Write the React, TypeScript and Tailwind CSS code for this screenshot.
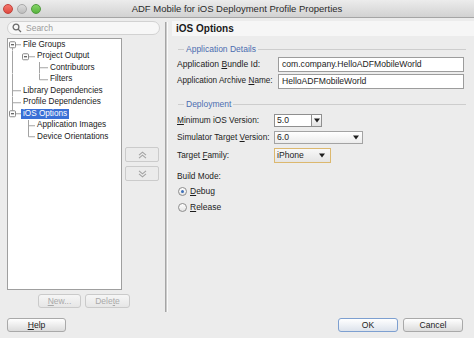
import type { ReactNode } from 'react';

function Expander({ cx }: { cx: number }) {
  return (
    <>
      <rect x={cx - 3} y={2.75} width={6} height={6} rx={1} fill="#fdfdfd" stroke="#8a8a8a" />
      <path d={`M${cx - 1.5} 5.75H${cx + 1.5}`} stroke="#333" />
    </>
  );
}

function TreeRow({
  gutter,
  label,
  selected,
  children,
}: {
  gutter: number;
  label: string;
  selected?: boolean;
  children: ReactNode;
}) {
  return (
    <div className="flex h-[11.5px] items-center">
      <svg width={gutter} height={11.5} viewBox={`0 0 ${gutter} 11.5`} className="shrink-0">
        <g stroke="#a3a3a3" fill="none">
          {children}
        </g>
      </svg>
      <span
        className={
          selected
            ? 'flex h-[10px] items-center whitespace-nowrap bg-[#3a70d6] px-[2px] text-[8.2px] leading-none text-white'
            : 'flex h-[10px] items-center whitespace-nowrap px-[2px] text-[8.2px] leading-none text-[#1a1a1a]'
        }
      >
        {label}
      </span>
    </div>
  );
}

function Chevrons({ up }: { up?: boolean }) {
  return (
    <svg width="9" height="8" viewBox="0 0 9 8" fill="none" stroke="#a2a2a2" strokeWidth="1.1">
      {up ? (
        <path d="M1 4.2 4.5 1.2 8 4.2M1 7.2 4.5 4.2 8 7.2" />
      ) : (
        <path d="M1 0.8 4.5 3.8 8 0.8M1 3.8 4.5 6.8 8 3.8" />
      )}
    </svg>
  );
}

function Arrow() {
  return (
    <svg width="6" height="5" viewBox="0 0 6 5" className="shrink-0">
      <path d="M0 0.5H6L3 4.5Z" fill="#1e1e1e" />
    </svg>
  );
}

function U({ children }: { children: ReactNode }) {
  return <span className="underline decoration-[0.8px] underline-offset-[1px]">{children}</span>;
}

function GroupTitle({ children }: { children: ReactNode }) {
  return (
    <div className="flex h-[10px] items-center pl-[6px] pr-[8px]">
      <div className="w-[6px] border-t border-[#cdcdcd]" />
      <span className="px-[2px] text-[8.5px] leading-none text-[#4b6cb0]">{children}</span>
      <div className="flex-1 border-t border-[#cdcdcd]" />
    </div>
  );
}

function Radio({ checked, children }: { checked?: boolean; children: ReactNode }) {
  return (
    <div className="flex h-[10px] items-center gap-[3px] pl-[6px]">
      <div className="flex h-[9px] w-[9px] items-center justify-center rounded-full border border-[#8d8d8d] bg-gradient-to-b from-white to-[#e4e4e4]">
        {checked && <div className="h-[3px] w-[3px] rounded-full bg-[#3d6fb8]" />}
      </div>
      <span className="text-[8.5px] leading-none">{children}</span>
    </div>
  );
}

function LeftColumn() {
  return (
    <div className="flex w-[165px] shrink-0 flex-col pl-[7px] pt-[3px]">
      <div className="flex h-[14px] w-[153px] items-center gap-[4px] rounded-full border border-[#d2d2d2] bg-[#f7f7f7] pl-[4px]">
        <svg width="10" height="10" viewBox="0 0 10 10" fill="none" stroke="#6a6a6a" strokeWidth="1.3">
          <circle cx="4" cy="4" r="2.9" />
          <path d="M6.1 6.1 9 9" />
        </svg>
        <span className="text-[8.5px] leading-none text-[#9b9b9b]">Search</span>
      </div>

      <div className="mt-[3px] flex">
        <div className="flex h-[252px] w-[115px] flex-col border border-[#9f9f9f] bg-white">
          <TreeRow gutter={13} label="File Groups">
            <path d="M4.5 8.75V11.5M7.5 5.75H13" />
            <Expander cx={4.5} />
          </TreeRow>
          <TreeRow gutter={27} label="Project Output">
            <path d="M4.5 0V11.5M20.5 5.75H27" />
            <Expander cx={17.5} />
          </TreeRow>
          <TreeRow gutter={40} label="Contributors">
            <path d="M4.5 0V11.5M31.5 0V11.5M31.5 5.75H40" />
          </TreeRow>
          <TreeRow gutter={40} label="Filters">
            <path d="M4.5 0V11.5M31.5 0V5.75H40" />
          </TreeRow>
          <TreeRow gutter={13} label="Library Dependencies">
            <path d="M4.5 0V11.5M4.5 5.75H13" />
          </TreeRow>
          <TreeRow gutter={13} label="Profile Dependencies">
            <path d="M4.5 0V11.5M4.5 5.75H13" />
          </TreeRow>
          <TreeRow gutter={13} label="iOS Options" selected>
            <path d="M4.5 0V2.75M7.5 5.75H13" />
            <Expander cx={4.5} />
          </TreeRow>
          <TreeRow gutter={27} label="Application Images">
            <path d="M20.5 0V11.5M20.5 5.75H27" />
          </TreeRow>
          <TreeRow gutter={27} label="Device Orientations">
            <path d="M20.5 0V5.75H27" />
          </TreeRow>
        </div>

        <div className="ml-[3px] flex w-[34px] flex-col justify-center gap-[4px]">
          <button className="flex h-[15px] items-center justify-center rounded-[2px] border border-[#cbcbcb] bg-[#ebebeb]">
            <Chevrons up />
          </button>
          <button className="flex h-[15px] items-center justify-center rounded-[2px] border border-[#cbcbcb] bg-[#ebebeb]">
            <Chevrons />
          </button>
        </div>
      </div>

      <div className="mt-[4px] flex gap-[4px] pl-[31px]">
        <button className="flex h-[14px] w-[43px] items-center justify-center rounded-[3px] border border-[#cacaca] bg-gradient-to-b from-[#f6f6f6] to-[#e6e6e6] text-[8.5px] leading-none text-[#a9a9a9]">
          <U>N</U>ew...
        </button>
        <button className="flex h-[14px] w-[45px] items-center justify-center rounded-[3px] border border-[#cacaca] bg-gradient-to-b from-[#f6f6f6] to-[#e6e6e6] text-[8.5px] leading-none text-[#a9a9a9]">
          Dele<U>t</U>e
        </button>
      </div>
    </div>
  );
}

function RightPanel() {
  return (
    <div className="flex flex-1 flex-col pl-[4px] pt-[3px]">
      <div className="flex h-[15px] items-center bg-[#f6f6f6] pl-[4px]">
        <span className="text-[10px] font-bold leading-none text-[#1a1a1a]">iOS Options</span>
      </div>

      <div className="mt-[8px]">
        <GroupTitle>Application Details</GroupTitle>
      </div>

      <div className="mt-[3px] flex h-[15px] items-center pl-[5px]">
        <span className="w-[101px] whitespace-nowrap text-[8.6px] leading-none">
          Application <U>B</U>undle Id:
        </span>
        <div className="flex h-[15px] w-[186px] items-center border border-[#9c9c9c] bg-white pl-[3px] text-[8.6px] leading-none">
          com.company.HelloADFMobileWorld
        </div>
      </div>
      <div className="mt-[2px] flex h-[15px] items-center pl-[5px]">
        <span className="w-[101px] whitespace-nowrap text-[8.2px] leading-none">
          Application Archive <U>N</U>ame:
        </span>
        <div className="flex h-[15px] w-[186px] items-center border border-[#9c9c9c] bg-white pl-[3px] text-[8.6px] leading-none">
          HelloADFMobileWorld
        </div>
      </div>

      <div className="mt-[10px]">
        <GroupTitle>Deployment</GroupTitle>
      </div>

      <div className="mt-[5px] flex h-[12px] items-center pl-[5px]">
        <span className="w-[97px] whitespace-nowrap text-[8.3px] leading-none">
          <U>M</U>inimum iOS Version:
        </span>
        <div className="flex h-[13px] w-[38px] items-center border border-[#8f8f8f] bg-white pl-[2px] text-[8.6px] leading-none">
          5.0
        </div>
        <div className="flex h-[13px] w-[10px] items-center justify-center border border-l-0 border-[#8f8f8f] bg-gradient-to-b from-white to-[#e2e2e2]">
          <Arrow />
        </div>
      </div>

      <div className="mt-[5px] flex h-[12px] items-center pl-[5px]">
        <span className="w-[97px] whitespace-nowrap text-[8.3px] leading-none">
          Simulator Target <U>V</U>ersion:
        </span>
        <div className="flex h-[13px] w-[89px] items-center justify-between border border-[#a3a3a3] bg-gradient-to-b from-white to-[#ececec] pl-[2px] pr-[3px] text-[8.6px] leading-none">
          <span>6.0</span>
          <Arrow />
        </div>
      </div>

      <div className="mt-[5px] flex h-[14px] items-center pl-[5px]">
        <span className="w-[97px] whitespace-nowrap text-[8.3px] leading-none">
          Target <U>F</U>amily:
        </span>
        <div className="flex h-[15px] w-[57px] items-center justify-between border-[1.5px] border-[#dcb86e] bg-gradient-to-b from-[#f8f8f8] to-[#e4e4e4] pl-[2px] pr-[5px] text-[8.6px] leading-none">
          <span>iPhone</span>
          <Arrow />
        </div>
      </div>

      <div className="mt-[9px] flex h-[10px] items-center pl-[5px]">
        <span className="text-[8.3px] leading-none">Build Mode:</span>
      </div>
      <div className="mt-[5px]">
        <Radio checked>
          <U>D</U>ebug
        </Radio>
      </div>
      <div className="mt-[6px]">
        <Radio>
          <U>R</U>elease
        </Radio>
      </div>
    </div>
  );
}

export default function App() {
  return (
    <div className="flex h-[338px] w-[474px] flex-col overflow-hidden bg-[#ececec] font-['Liberation_Sans',Arial,sans-serif] text-[#1c1c1c]">
      <div className="grid h-[18px] shrink-0 grid-cols-[50px_1fr_50px] items-center border-b border-[#a5a5a5] bg-gradient-to-b from-[#ececec] to-[#d2d2d2]">
        <div className="flex items-center gap-[4px] pl-[3px]">
          <div className="h-[10px] w-[10px] rounded-full border border-[#c1413a] bg-gradient-to-b from-[#f5756c] to-[#df4a40]" />
          <div className="h-[10px] w-[10px] rounded-full border border-[#a8a8a8] bg-gradient-to-b from-[#dcdcdc] to-[#bdbdbd]" />
          <div className="h-[10px] w-[10px] rounded-full border border-[#4f9a3d] bg-gradient-to-b from-[#84d466] to-[#58b43e]" />
        </div>
        <div className="text-center text-[9.5px] leading-none text-[#2b2b2b]">
          ADF Mobile for iOS Deployment Profile Properties
        </div>
        <div />
      </div>

      <div className="flex h-[295px] shrink-0">
        <LeftColumn />
        <div className="mt-[4px] h-[290px] w-[3px] shrink-0 border-l border-r border-l-[#a5a5a5] border-r-[#fafafa] bg-[#cbcbcb]" />
        <RightPanel />
      </div>

      <div className="flex items-start pl-[7px] pr-[11px] pt-[5px]">
        <button className="flex h-[14px] w-[59px] items-center justify-center rounded-[3px] border border-[#a9a9a9] bg-gradient-to-b from-white to-[#dcdcdc] text-[8.6px] leading-none">
          <U>H</U>elp
        </button>
        <div className="flex-1" />
        <div className="flex gap-[5px]">
          <button className="flex h-[14px] w-[60px] items-center justify-center rounded-[3px] border border-[#7d9fd0] bg-gradient-to-b from-white to-[#dde3ec] text-[8.6px] leading-none">
            OK
          </button>
          <button className="flex h-[14px] w-[60px] items-center justify-center rounded-[3px] border border-[#a9a9a9] bg-gradient-to-b from-white to-[#dcdcdc] text-[8.6px] leading-none">
            Cancel
          </button>
        </div>
      </div>
    </div>
  );
}
